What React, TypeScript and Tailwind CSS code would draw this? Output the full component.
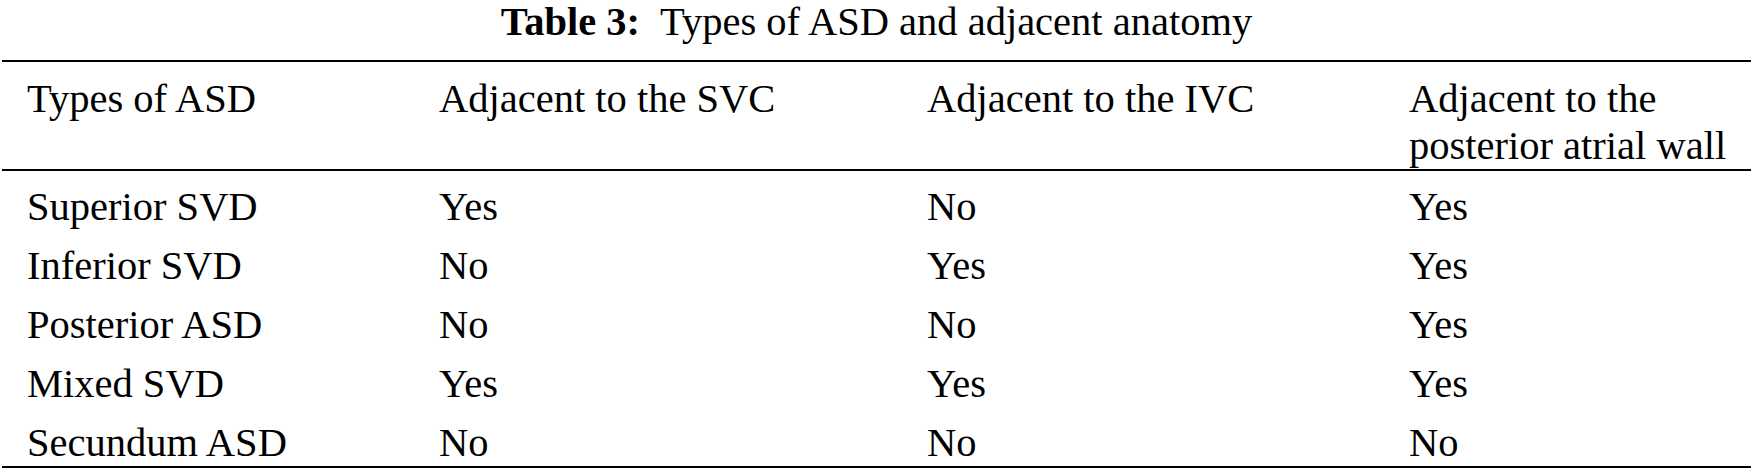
const COLS = "grid grid-cols-[412px_488px_482px_1fr] pl-[27px]";

const ROWS: [string, string, string, string][] = [
  ["Superior SVD", "Yes", "No", "Yes"],
  ["Inferior SVD", "No", "Yes", "Yes"],
  ["Posterior ASD", "No", "No", "Yes"],
  ["Mixed SVD", "Yes", "Yes", "Yes"],
  ["Secundum ASD", "No", "No", "No"],
];

function Rule() {
  return <div className="mx-[2px] h-[2px] bg-black" />;
}

export default function App() {
  return (
    <div className="h-[473px] w-[1753px] bg-white font-[family-name:Liberation_Serif,Times_New_Roman,serif] text-[40.5px] text-black">
      {/* Caption */}
      <div className="flex h-[60px] justify-center leading-[44px]">
        <span>
          <b>Table 3:</b>
          <span className="ml-[20px]">Types of ASD and adjacent anatomy</span>
        </span>
      </div>

      <Rule />

      {/* Header */}
      <div className={`${COLS} pt-[13px] leading-[47px]`}>
        <div>Types of ASD</div>
        <div>Adjacent to the SVC</div>
        <div>Adjacent to the IVC</div>
        <div>
          Adjacent to the
          <br />
          posterior atrial wall
        </div>
      </div>

      <Rule />

      {/* Body */}
      <div>
        {ROWS.map((row) => (
          <div key={row[0]} className={`${COLS} pt-[13px] leading-[46px]`}>
            {row.map((cell, i) => (
              <div key={i}>{cell}</div>
            ))}
          </div>
        ))}
      </div>

      <Rule />
    </div>
  );
}
